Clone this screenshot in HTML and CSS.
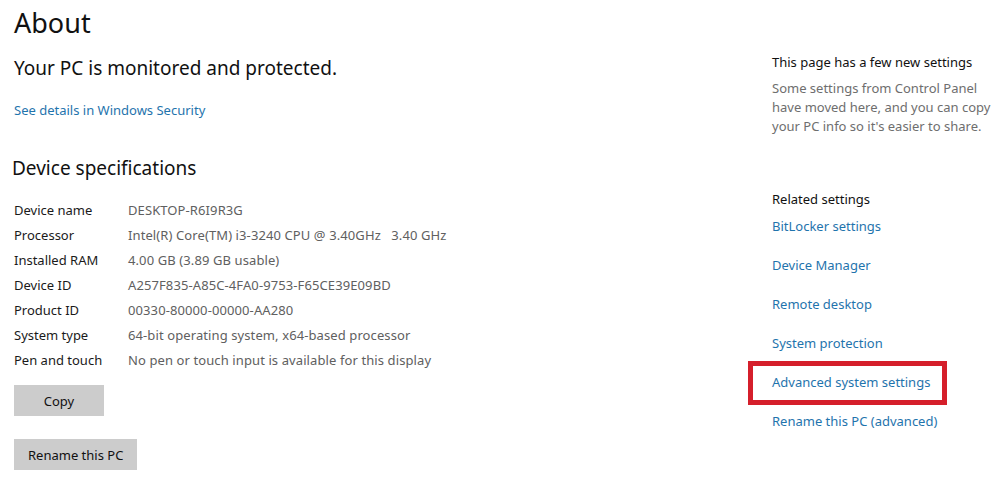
FILE: index.html
```html
<!DOCTYPE html>
<html lang="en">
<head>
    <meta charset="UTF-8">
    <title>About</title>
    <link rel="stylesheet" href="styles.css">
</head>
<body>
    <div class="page">
        <div class="main">
            <h1>About</h1>
            <h2 class="status">Your PC is monitored and protected.</h2>
            <a class="link security" href="#">See details in Windows Security</a>

            <h2 class="section">Device specifications</h2>
            <div class="specs">
                <span class="label">Device name</span><span class="value">DESKTOP-R6I9R3G</span>
                <span class="label">Processor</span><span class="value">Intel(R) Core(TM) i3-3240 CPU @ 3.40GHz &nbsp;&nbsp;3.40 GHz</span>
                <span class="label">Installed RAM</span><span class="value">4.00 GB (3.89 GB usable)</span>
                <span class="label">Device ID</span><span class="value">A257F835-A85C-4FA0-9753-F65CE39E09BD</span>
                <span class="label">Product ID</span><span class="value">00330-80000-00000-AA280</span>
                <span class="label">System type</span><span class="value">64-bit operating system, x64-based processor</span>
                <span class="label">Pen and touch</span><span class="value">No pen or touch input is available for this display</span>
            </div>
            <button class="btn copy">Copy</button>
            <button class="btn rename">Rename this PC</button>
        </div>

        <div class="side">
            <div class="side-title">This page has a few new settings</div>
            <p class="note">Some settings from Control Panel have moved here, and you can copy your PC info so it's easier to share.</p>

            <div class="side-title related">Related settings</div>
            <ul class="links">
                <li><a class="link" href="#">BitLocker settings</a></li>
                <li><a class="link" href="#">Device Manager</a></li>
                <li><a class="link" href="#">Remote desktop</a></li>
                <li><a class="link" href="#">System protection</a></li>
                <li class="marked"><a class="link" href="#">Advanced system settings</a></li>
                <li><a class="link" href="#">Rename this PC (advanced)</a></li>
            </ul>
        </div>
    </div>
</body>
</html>
```
FILE: styles.css
```css
body {
    margin: 0;
    background: #ffffff;
    color: #111111;
    font-family: "Noto Sans", "Open Sans", sans-serif;
    font-size: 13px;
}
.page {
    display: flex;
    padding-left: 14px;
}
.main {
    width: 758px;
    display: flex;
    flex-direction: column;
    align-items: flex-start;
}
h1 {
    font-size: 27px;
    font-weight: 400;
    line-height: 36px;
    margin: 5px 0 0;
}
.status {
    font-size: 19px;
    font-weight: 400;
    line-height: 26px;
    margin: 14px 0 0;
}
.link {
    color: #1f74ad;
    text-decoration: none;
}
.security {
    margin-top: 19px;
    line-height: 20px;
}
.section {
    font-size: 19px;
    font-weight: 400;
    line-height: 26px;
    margin: 35px 0 0 -2px;
}
.specs {
    display: grid;
    grid-template-columns: 114px auto;
    grid-auto-rows: 25px;
    align-items: center;
    margin-top: 16px;
}
.label {
    color: #1a1a1a;
}
.value {
    color: #606060;
    letter-spacing: 0.1px;
}
.btn {
    font-family: inherit;
    font-size: 13px;
    color: #111111;
    background: #cccccc;
    border: none;
    height: 31px;
    padding: 0 14px;
}
.copy {
    width: 90px;
    margin-top: 13px;
}
.rename {
    margin-top: 23px;
}
.side {
    width: 230px;
    padding-top: 52px;
}
.side-title {
    line-height: 20px;
}
.note {
    color: #6e6e6e;
    line-height: 19px;
    margin: 7px 0 0;
}
.related {
    margin-top: 53px;
}
.links {
    list-style: none;
    margin: 7px 0 0;
    padding: 0;
}
.links li {
    line-height: 20px;
    margin-bottom: 19px;
    position: relative;
}
.marked::before {
    content: "";
    position: absolute;
    left: -24px;
    top: -11px;
    width: 189px;
    height: 34px;
    border: 5px solid #d51f2b;
}
```
